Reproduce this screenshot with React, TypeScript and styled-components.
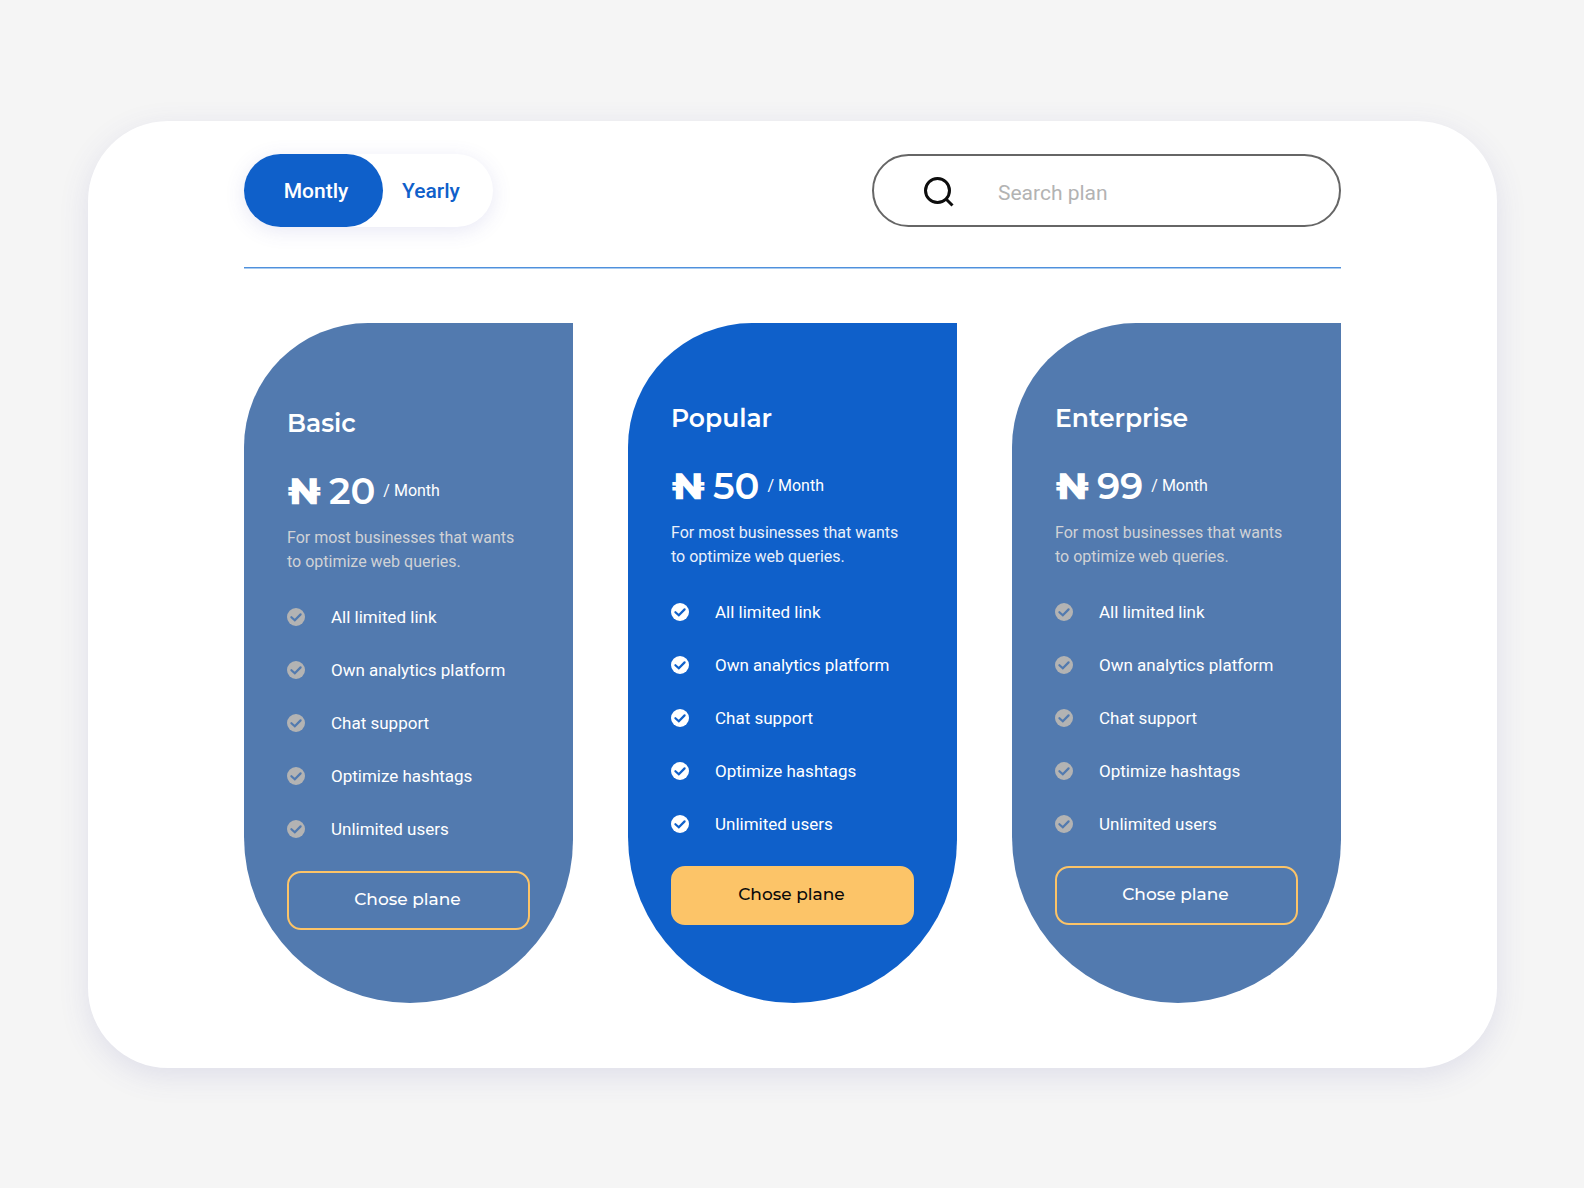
import React, { useState } from "react";
import styled, { createGlobalStyle } from "styled-components";

const BODY_FONT = `Roboto, "Liberation Sans", sans-serif`;
const DISPLAY_FONT = `Montserrat, Inter, "Liberation Sans", sans-serif`;

const BLUE = "#0f60ca";
const STEEL = "#527aaf";
const AMBER = "#fcc468";

const GlobalStyle = createGlobalStyle`
  *, *::before, *::after { box-sizing: border-box; }
  body {
    margin: 0;
    background: #f5f5f5;
    font-family: ${BODY_FONT};
    color: #ffffff;
  }
  button, input { font: inherit; }
`;

const Page = styled.div`
  padding: 121px 87px 120px 88px;
`;

const Panel = styled.main`
  background: #ffffff;
  border-radius: 80px;
  padding: 33px 156px 65px;
  box-shadow: 0 8px 30px rgba(80, 80, 160, 0.13);
`;

const Toolbar = styled.header`
  display: flex;
  justify-content: space-between;
  align-items: center;
  gap: 24px;
`;

const Toggle = styled.div`
  display: flex;
  width: 249px;
  height: 73px;
  border-radius: 37px;
  background: #ffffff;
  box-shadow: 0 4px 20px rgba(80, 80, 180, 0.13);
`;

const ToggleOption = styled.button<{ $active: boolean }>`
  flex: ${({ $active }) => ($active ? "0 0 139px" : "1")};
  border: 0;
  border-radius: 37px;
  padding: ${({ $active }) => ($active ? "0 0 0 5px" : "0 14px 0 0")};
  background: ${({ $active }) => ($active ? BLUE : "transparent")};
  color: ${({ $active }) => ($active ? "#ffffff" : BLUE)};
  font-size: 21px;
  font-weight: 500;
  cursor: pointer;
`;

const SearchBox = styled.label`
  display: flex;
  align-items: center;
  flex: 0 1 469px;
  height: 73px;
  padding: 0 48px;
  gap: 40px;
  border: 2px solid #666666;
  border-radius: 37px;
`;

const SearchInput = styled.input`
  flex: 1;
  min-width: 0;
  padding: 4px 0 0;
  border: 0;
  outline: 0;
  background: transparent;
  color: #222222;
  font-size: 21px;
  &::placeholder {
    color: #b3b3b3;
    opacity: 1;
  }
`;

const Divider = styled.hr`
  height: 2px;
  margin: 40px 0 54px;
  border: 0;
  border-top: 1px solid #4f90dc;
  border-bottom: 1px solid #a9cbf0;
`;

const Plans = styled.section`
  display: grid;
  grid-template-columns: repeat(3, 1fr);
  gap: 55px;
`;

const Card = styled.article<{ $featured: boolean; $lowered: boolean }>`
  display: flex;
  flex-direction: column;
  min-height: 680px;
  padding: ${({ $lowered }) => ($lowered ? 84 : 79)}px 43px 0;
  border-radius: 124px 0 163px 166px;
  background: ${({ $featured }) => ($featured ? BLUE : STEEL)};
`;

const PlanName = styled.h2`
  margin: 0;
  font-family: ${DISPLAY_FONT};
  font-size: 25px;
  font-weight: 600;
  line-height: 32px;
`;

const Price = styled.p`
  display: flex;
  align-items: center;
  gap: 8px;
  margin: 28px 0 0;
  font-family: ${DISPLAY_FONT};
  font-size: 37px;
  font-weight: 600;
  line-height: 48px;
`;

const Currency = styled.span`
  font-weight: 800;
`;

const Period = styled.span`
  font-family: ${BODY_FONT};
  font-size: 16px;
  font-weight: 400;
  line-height: 24px;
`;

const Summary = styled.p<{ $featured: boolean }>`
  max-width: 230px;
  margin: 11px 0 0;
  color: ${({ $featured }) => ($featured ? "#eaf0fa" : "#d0d2d6")};
  font-size: 16px;
  line-height: 24px;
`;

const Features = styled.ul`
  display: flex;
  flex-direction: column;
  gap: 33px;
  margin: 33px 0 0;
  padding: 0;
  list-style: none;
`;

const Feature = styled.li`
  display: flex;
  align-items: center;
  gap: 26px;
  height: 20px;
  font-size: 17px;
  line-height: 20px;
`;

const ChooseButton = styled.button<{ $featured: boolean }>`
  height: 59px;
  margin-top: 32px;
  padding: 0 2px 4px 0;
  border: 2px solid ${AMBER};
  border-radius: 14px;
  background: ${({ $featured }) => ($featured ? AMBER : "transparent")};
  color: ${({ $featured }) => ($featured ? "#0a0a0a" : "#ffffff")};
  font-family: ${DISPLAY_FONT};
  font-size: 17px;
  font-weight: 500;
  cursor: pointer;
`;

function SearchIcon() {
  return (
    <svg width="36" height="36" viewBox="0 0 36 36" fill="none" stroke="#0d0d0d" strokeWidth="3" aria-hidden="true">
      <circle cx="15.5" cy="17.5" r="12" />
      <path d="M24 26 L30.5 32.5" />
    </svg>
  );
}

function CheckIcon({ disc, mark }: { disc: string; mark: string }) {
  return (
    <svg width="18" height="18" viewBox="0 0 18 18" fill="none" aria-hidden="true">
      <circle cx="9" cy="9" r="9" fill={disc} />
      <path d="M4.4 9.2 L7.8 12.2 L13.6 6.4" stroke={mark} strokeWidth="2.2" strokeLinecap="round" />
    </svg>
  );
}

const FEATURES = ["All limited link", "Own analytics platform", "Chat support", "Optimize hashtags", "Unlimited users"];

interface Plan {
  name: string;
  price: number;
  featured?: boolean;
  lowered?: boolean;
}

const PLANS: Plan[] = [
  { name: "Basic", price: 20, lowered: true },
  { name: "Popular", price: 50, featured: true },
  { name: "Enterprise", price: 99 },
];

function PlanCard({ name, price, featured = false, lowered = false }: Plan) {
  return (
    <Card $featured={featured} $lowered={lowered}>
      <PlanName>{name}</PlanName>
      <Price>
        <Currency>₦</Currency>
        <span>{price}</span>
        <Period>/ Month</Period>
      </Price>
      <Summary $featured={featured}>For most businesses that wants to optimize web queries.</Summary>
      <Features>
        {FEATURES.map((feature) => (
          <Feature key={feature}>
            <CheckIcon disc={featured ? "#ffffff" : "#b3b3b3"} mark={featured ? BLUE : STEEL} />
            {feature}
          </Feature>
        ))}
      </Features>
      <ChooseButton type="button" $featured={featured}>
        Chose plane
      </ChooseButton>
    </Card>
  );
}

export default function App() {
  const [monthly, setMonthly] = useState(true);
  return (
    <Page>
      <GlobalStyle />
      <Panel>
        <Toolbar>
          <Toggle role="group" aria-label="Billing period">
            <ToggleOption type="button" $active={monthly} aria-pressed={monthly} onClick={() => setMonthly(true)}>
              Montly
            </ToggleOption>
            <ToggleOption type="button" $active={!monthly} aria-pressed={!monthly} onClick={() => setMonthly(false)}>
              Yearly
            </ToggleOption>
          </Toggle>
          <SearchBox>
            <SearchIcon />
            <SearchInput type="search" placeholder="Search plan" aria-label="Search plan" />
          </SearchBox>
        </Toolbar>
        <Divider />
        <Plans>
          {PLANS.map((plan) => (
            <PlanCard key={plan.name} {...plan} />
          ))}
        </Plans>
      </Panel>
    </Page>
  );
}
